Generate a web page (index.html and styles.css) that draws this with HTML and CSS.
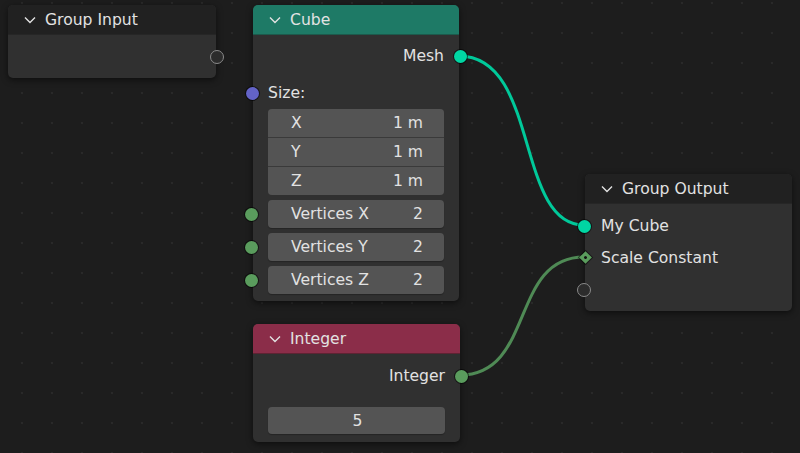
FILE: index.html
```html
<!DOCTYPE html>
<html lang="en">
<head>
    <meta charset="UTF-8">
    <title>Node Editor</title>
    <link rel="stylesheet" href="styles.css">
</head>
<body>
    <div class="canvas">
        <!-- links sit under the nodes -->
        <svg class="links" width="800" height="453" viewBox="0 0 800 453">
            <path class="link link-mesh" d="M459 56 C 540 56, 515 225, 584 225"/>
            <path class="link link-int" d="M460 375 C 535 375, 510 257, 584 257"/>
        </svg>

        <!-- Group Input -->
        <div class="node node-group-in">
            <div class="node-header header-plain">
                <svg class="chevron" width="12" height="8" viewBox="0 0 12 8"><polyline points="1,1.5 6,6.5 11,1.5"/></svg>
                <span>Group Input</span>
            </div>
            <div class="node-body body-group-in">
                <div class="row row-out">
                    <span class="socket socket-out socket-empty"></span>
                </div>
            </div>
        </div>

        <!-- Cube -->
        <div class="node node-cube">
            <div class="node-header header-geo">
                <svg class="chevron" width="12" height="8" viewBox="0 0 12 8"><polyline points="1,1.5 6,6.5 11,1.5"/></svg>
                <span>Cube</span>
            </div>
            <div class="node-body body-cube">
                <div class="row row-out">
                    <span>Mesh</span>
                    <span class="socket socket-out socket-geo"></span>
                </div>
                <div class="row row-in row-size">
                    <span class="socket socket-in socket-vec"></span>
                    <span>Size:</span>
                </div>
                <div class="field-group">
                    <div class="field"><span>X</span><span>1 m</span></div>
                    <div class="field"><span>Y</span><span>1 m</span></div>
                    <div class="field"><span>Z</span><span>1 m</span></div>
                </div>
                <div class="field field-single">
                    <span class="socket socket-in-field socket-int"></span>
                    <span>Vertices X</span><span>2</span>
                </div>
                <div class="field field-single">
                    <span class="socket socket-in-field socket-int"></span>
                    <span>Vertices Y</span><span>2</span>
                </div>
                <div class="field field-single">
                    <span class="socket socket-in-field socket-int"></span>
                    <span>Vertices Z</span><span>2</span>
                </div>
            </div>
        </div>

        <!-- Integer -->
        <div class="node node-integer">
            <div class="node-header header-input">
                <svg class="chevron" width="12" height="8" viewBox="0 0 12 8"><polyline points="1,1.5 6,6.5 11,1.5"/></svg>
                <span>Integer</span>
            </div>
            <div class="node-body body-integer">
                <div class="row row-out">
                    <span>Integer</span>
                    <span class="socket socket-out socket-int"></span>
                </div>
                <div class="field field-single field-center"><span>5</span></div>
            </div>
        </div>

        <!-- Group Output -->
        <div class="node node-group-out">
            <div class="node-header header-plain">
                <svg class="chevron" width="12" height="8" viewBox="0 0 12 8"><polyline points="1,1.5 6,6.5 11,1.5"/></svg>
                <span>Group Output</span>
            </div>
            <div class="node-body body-group-out">
                <div class="row row-in">
                    <span class="socket socket-in socket-geo"></span>
                    <span>My Cube</span>
                </div>
                <div class="row row-in">
                    <span class="socket-diamond"></span>
                    <span>Scale Constant</span>
                </div>
                <div class="row row-in">
                    <span class="socket socket-in socket-empty"></span>
                </div>
            </div>
        </div>
    </div>
</body>
</html>
```

FILE: styles.css
```css
body {
    margin: 0;
    background-color: #1d1d1d;
    font-family: "DejaVu Sans", "Liberation Sans", sans-serif;
    font-size: 15.6px;
    color: #e2e2e2;
}

.canvas {
    position: relative;
    width: 800px;
    height: 453px;
    overflow: hidden;
    background-color: #1d1d1d;
    background-image: radial-gradient(circle, #292929 0, #292929 1px, transparent 1.6px);
    background-size: 30px 30px;
    background-position: 7px -12px;
}

.links {
    position: absolute;
    left: 0;
    top: 0;
}

.link {
    fill: none;
    stroke-width: 3;
    stroke-linecap: round;
}

.link-mesh {
    stroke: #00c99a;
}

.link-int {
    stroke: #4f8a55;
}

/* nodes */
.node {
    position: absolute;
    background-color: #303030;
    border-radius: 5px;
    box-shadow: 0 2px 6px rgba(0, 0, 0, 0.55);
}

.node-group-in {
    left: 8px;
    top: 5px;
    width: 208px;
}

.node-cube {
    left: 253px;
    top: 5px;
    width: 206px;
}

.node-integer {
    left: 253px;
    top: 324px;
    width: 207px;
}

.node-group-out {
    left: 585px;
    top: 174px;
    width: 207px;
}

.node-header {
    height: 29px;
    display: flex;
    align-items: center;
    gap: 9px;
    padding-left: 16px;
    border-radius: 5px 5px 0 0;
    border-bottom: 1px solid #262626;
}

.header-plain {
    background-color: #212121;
}

.header-geo {
    background-color: #1e7a66;
    border-bottom-color: #1c5a4c;
}

.header-input {
    background-color: #8b2d49;
    border-bottom-color: #5e2333;
}

.chevron polyline {
    fill: none;
    stroke: #e2e2e2;
    stroke-width: 1.4;
}

.node-body {
    padding: 0 15px;
}

.body-group-in {
    padding-top: 8px;
    padding-bottom: 7px;
}

.body-cube {
    padding-top: 6px;
    padding-bottom: 7px;
}

.body-integer {
    padding-top: 8px;
    padding-bottom: 8px;
}

.body-group-out {
    padding-top: 6px;
    padding-bottom: 5px;
}

.row {
    position: relative;
    height: 28px;
    display: flex;
    align-items: center;
}

.body-cube > .row-out {
    height: 30px;
}

.row-out {
    justify-content: flex-end;
}

.row-size {
    margin-top: 8px;
}

.body-group-out .row {
    height: 32px;
    margin-left: 1px;
}

/* sockets */
.socket {
    position: absolute;
    top: 50%;
    width: 13px;
    height: 13px;
    margin-top: -6.5px;
    border-radius: 50%;
    box-sizing: border-box;
    box-shadow: 0 0 0 1px rgba(0, 0, 0, 0.55);
}

.socket-out {
    right: -22.5px;
}

.socket-in {
    left: -22.5px;
}

.body-group-out .socket-in {
    left: -23.5px;
}

.socket-in-field {
    left: -23.5px;
}

.socket-geo {
    background-color: #00d6a3;
}

.socket-vec {
    background-color: #6363c7;
}

.socket-int {
    background-color: #5a9c5d;
}

.socket-empty {
    background-color: #2c2c2c;
    border: 1.5px solid #8a8a8a;
    box-shadow: none;
    width: 14px;
    height: 14px;
    margin-top: -7px;
}

.socket-out.socket-empty {
    right: -23px;
}

.body-group-out .socket-empty {
    left: -24px;
}

.socket-diamond {
    position: absolute;
    left: -20px;
    top: 50%;
    width: 9px;
    height: 9px;
    margin-top: -5px;
    background-color: #5a9c5d;
    transform: rotate(45deg);
    box-shadow: 0 0 0 1px rgba(0, 0, 0, 0.5);
}

.socket-diamond::after {
    content: "";
    position: absolute;
    left: 3px;
    top: 3px;
    width: 3px;
    height: 3px;
    border-radius: 50%;
    background-color: #111;
}

/* fields */
.field-group {
    margin-top: 2px;
    border-radius: 4px;
    overflow: hidden;
    display: flex;
    flex-direction: column;
    gap: 1px;
    background-color: #3a3a3a;
}

.field {
    position: relative;
    height: 28px;
    display: flex;
    align-items: center;
    justify-content: space-between;
    padding: 0 21px 0 23px;
    background-color: #545454;
}

.field-single {
    margin-top: 5px;
    border-radius: 4px;
    box-shadow: 0 1px 1px rgba(0, 0, 0, 0.25);
}

.field-group + .field-single {
    margin-top: 5px;
}

.field-center {
    justify-content: center;
    margin-top: 17px;
    height: 27px;
}
```
